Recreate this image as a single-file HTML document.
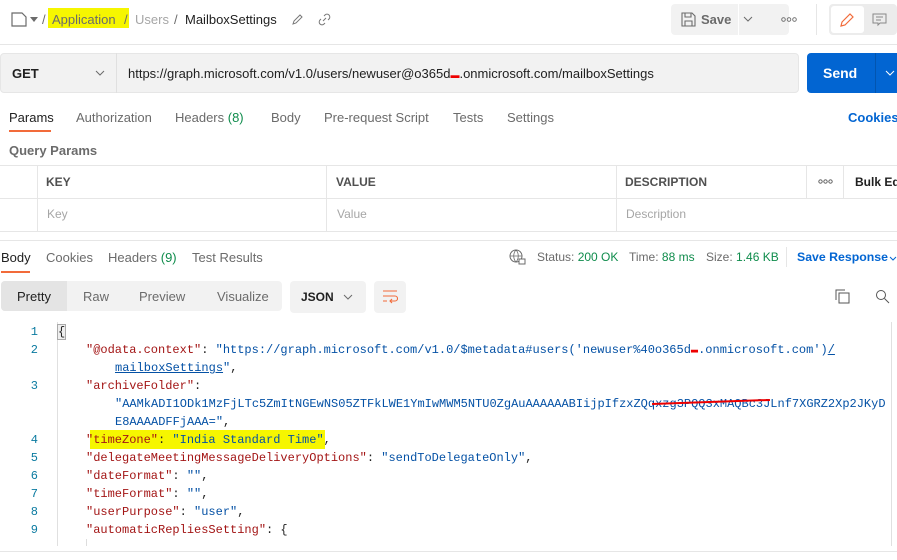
<!DOCTYPE html>
<html><head><meta charset="utf-8"><style>
*{box-sizing:border-box;margin:0;padding:0}
body{width:897px;height:560px;overflow:hidden;background:#fff;font-family:"Liberation Sans",Arial,sans-serif;font-size:13px;color:#212121;position:relative}
.a{position:absolute;white-space:nowrap}
.g{color:#6b6b6b}
.code{font-family:"Liberation Mono",monospace;font-size:12px}
.k{color:#a31515}.v{color:#0451a5}.p{color:#212121}
.ln{position:absolute;left:0;width:38px;text-align:right;color:#0a7aa0;font-family:"Liberation Mono",monospace;font-size:12px}
</style></head><body>
<!-- top bar -->
<svg class="a" style="left:11px;top:12px" width="16" height="15" viewBox="0 0 16 15"><path d="M1 1h10l4 4v9H1z" fill="none" stroke="#6b6b6b" stroke-width="1.2"/></svg>
<div class="a" style="left:30px;top:12px;width:0;height:0;border-left:4px solid transparent;border-right:4px solid transparent;border-top:5px solid #6b6b6b;top:17px"></div>
<div class="a g" style="left:42px;top:12px">/</div>
<div class="a" style="left:48px;top:8px;width:81px;height:20px;background:#f6f600"></div>
<div class="a" style="left:52px;top:12px;color:#6b6b6b">Application</div>
<div class="a g" style="left:124px;top:12px">/</div>
<div class="a" style="left:135px;top:12px;color:#a6a6a6">Users</div>
<div class="a g" style="left:174px;top:12px">/</div>
<div class="a" style="left:185px;top:12px;color:#212121">MailboxSettings</div>
<svg class="a" style="left:291px;top:13px" width="13" height="13" viewBox="0 0 13 13"><path d="M2 11l1-3 6-6 2 2-6 6z" fill="none" stroke="#777" stroke-width="1"/></svg>
<svg class="a" style="left:318px;top:13px" width="13" height="13" viewBox="0 0 13 13"><path d="M5 8l3-3M6 3l1-1a2.5 2.5 0 0 1 4 4l-1 1M7 10l-1 1a2.5 2.5 0 0 1-4-4l1-1" fill="none" stroke="#777" stroke-width="1"/></svg>
<div class="a" style="left:671px;top:4px;width:118px;height:31px;background:#f2f2f2;border-radius:4px"></div>
<div class="a" style="left:738px;top:4px;width:1px;height:31px;background:#fff"></div>
<svg class="a" style="left:681px;top:12px" width="15" height="15" viewBox="0 0 15 15"><path d="M1 1h10l3 3v10H1zM4 1v4h6V1M4 14V9h7v5" fill="none" stroke="#6b6b6b" stroke-width="1.1"/></svg>
<div class="a" style="left:701px;top:12px;color:#6b6b6b;font-weight:bold">Save</div>
<svg class="a" style="left:743px;top:16px" width="10" height="6"><path d="M1 1l4 4 4-4" fill="none" stroke="#6b6b6b"/></svg>
<svg class="a" style="left:781px;top:17px" width="16" height="5"><circle cx="2.5" cy="2.5" r="1.8" fill="none" stroke="#6b6b6b" stroke-width=".9"/><circle cx="8" cy="2.5" r="1.8" fill="none" stroke="#6b6b6b" stroke-width=".9"/><circle cx="13.5" cy="2.5" r="1.8" fill="none" stroke="#6b6b6b" stroke-width=".9"/></svg>
<div class="a" style="left:816px;top:4px;width:1px;height:31px;background:#e6e6e6"></div>
<div class="a" style="left:829px;top:4px;width:68px;height:31px;background:#ececec;border-radius:4px"></div>
<div class="a" style="left:831px;top:6px;width:33px;height:27px;background:#fff;border-radius:3px"></div>
<svg class="a" style="left:840px;top:12px" width="15" height="15" viewBox="0 0 15 15"><path d="M1 14l1-4 8-8 3 3-8 8z" fill="none" stroke="#f26b3a" stroke-width="1.2"/></svg>
<svg class="a" style="left:872px;top:13px" width="15" height="14" viewBox="0 0 15 14"><path d="M1 1h13v9H8l-2 2v-2H1zM4 4h7M4 7h5" fill="none" stroke="#888" stroke-width="1"/></svg>
<div class="a" style="left:0;top:44px;width:897px;height:1px;background:#e6e6e6"></div>
<!-- url row -->
<div class="a" style="left:0;top:53px;width:799px;height:40px;background:#f2f2f2;border:1px solid #e6e6e6;border-radius:4px"></div>
<div class="a" style="left:116px;top:53px;width:1px;height:40px;background:#e0e0e0"></div>
<div class="a" style="left:12px;top:66px;font-weight:bold;color:#212121">GET</div>
<svg class="a" style="left:95px;top:70px" width="10" height="6"><path d="M1 1l4 4 4-4" fill="none" stroke="#6b6b6b"/></svg>
<div class="a" style="left:128px;top:66px;color:#212121">https://graph.microsoft.com/v1.0/users/newuser@o365d<span style="color:#e00;font-weight:bold;font-size:9px">▬</span>.onmicrosoft.com/mailboxSettings</div>
<div class="a" style="left:807px;top:53px;width:90px;height:40px;background:#0265d2;border-radius:4px 0 0 4px"></div>
<div class="a" style="left:875px;top:53px;width:1px;height:40px;background:#0255b0"></div>
<div class="a" style="left:823px;top:65px;color:#fff;font-weight:bold;font-size:14px">Send</div>
<svg class="a" style="left:885px;top:70px" width="10" height="6"><path d="M1 1l4 4 4-4" fill="none" stroke="#fff"/></svg>
<!-- request tabs -->
<div class="a" style="left:9px;top:110px;color:#212121">Params</div>
<div class="a" style="left:9px;top:130px;width:42px;height:2px;background:#f26b3a"></div>
<div class="a g" style="left:76px;top:110px">Authorization</div>
<div class="a g" style="left:175px;top:110px">Headers <span style="color:#0f8c4c">(8)</span></div>
<div class="a g" style="left:271px;top:110px">Body</div>
<div class="a g" style="left:324px;top:110px">Pre-request Script</div>
<div class="a g" style="left:453px;top:110px">Tests</div>
<div class="a g" style="left:507px;top:110px">Settings</div>
<div class="a" style="left:848px;top:110px;color:#0265d2;font-weight:bold">Cookies</div>
<div class="a" style="left:9px;top:143px;color:#6b6b6b;font-weight:bold">Query Params</div>
<!-- table -->
<div class="a" style="left:0;top:165px;width:897px;height:1px;background:#e6e6e6"></div>
<div class="a" style="left:0;top:198px;width:897px;height:1px;background:#e6e6e6"></div>
<div class="a" style="left:0;top:231px;width:897px;height:1px;background:#e6e6e6"></div>
<div class="a" style="left:37px;top:165px;width:1px;height:66px;background:#e6e6e6"></div>
<div class="a" style="left:326px;top:165px;width:1px;height:66px;background:#e6e6e6"></div>
<div class="a" style="left:616px;top:165px;width:1px;height:66px;background:#e6e6e6"></div>
<div class="a" style="left:806px;top:165px;width:1px;height:33px;background:#e6e6e6"></div>
<div class="a" style="left:843px;top:165px;width:1px;height:33px;background:#e6e6e6"></div>
<div class="a" style="left:46px;top:175px;color:#505050;font-weight:bold;font-size:12px">KEY</div>
<div class="a" style="left:336px;top:175px;color:#505050;font-weight:bold;font-size:12px">VALUE</div>
<div class="a" style="left:625px;top:175px;color:#505050;font-weight:bold;font-size:12px">DESCRIPTION</div>
<svg class="a" style="left:818px;top:179px" width="15" height="5"><circle cx="2.5" cy="2.5" r="1.7" fill="none" stroke="#555" stroke-width=".9"/><circle cx="7.5" cy="2.5" r="1.7" fill="none" stroke="#555" stroke-width=".9"/><circle cx="12.5" cy="2.5" r="1.7" fill="none" stroke="#555" stroke-width=".9"/></svg>
<div class="a" style="left:855px;top:175px;color:#212121;font-weight:bold;font-size:12px">Bulk Edit</div>
<div class="a" style="left:47px;top:207px;color:#a6a6a6;font-size:12px">Key</div>
<div class="a" style="left:337px;top:207px;color:#a6a6a6;font-size:12px">Value</div>
<div class="a" style="left:626px;top:207px;color:#a6a6a6;font-size:12px">Description</div>
<div class="a" style="left:0;top:240px;width:897px;height:1px;background:#e6e6e6"></div>
<!-- response tabs -->
<div class="a" style="left:1px;top:250px;color:#212121">Body</div>
<div class="a" style="left:1px;top:271px;width:29px;height:2px;background:#f26b3a"></div>
<div class="a g" style="left:46px;top:250px">Cookies</div>
<div class="a g" style="left:108px;top:250px">Headers <span style="color:#0f8c4c">(9)</span></div>
<div class="a g" style="left:192px;top:250px">Test Results</div>
<svg class="a" style="left:509px;top:249px" width="17" height="16" viewBox="0 0 17 16"><circle cx="7" cy="7" r="6" fill="none" stroke="#6b6b6b"/><path d="M1 7h12M7 1c-3 3-3 9 0 12M7 1c3 3 3 9 0 12" fill="none" stroke="#6b6b6b" stroke-width=".8"/><rect x="10" y="10" width="6" height="5" fill="#fff" stroke="#6b6b6b"/></svg>
<div class="a g" style="left:537px;top:250px;font-size:12px">Status: <span style="color:#0f8c4c">200 OK</span></div>
<div class="a g" style="left:629px;top:250px;font-size:12px">Time: <span style="color:#0f8c4c">88 ms</span></div>
<div class="a g" style="left:706px;top:250px;font-size:12px">Size: <span style="color:#0f8c4c">1.46 KB</span></div>
<div class="a" style="left:786px;top:247px;width:1px;height:20px;background:#e6e6e6"></div>
<div class="a" style="left:797px;top:250px;color:#0265d2;font-weight:bold;font-size:12.3px">Save Response</div>
<svg class="a" style="left:889px;top:256px" width="8" height="5"><path d="M1 1l3 3 3-3" fill="none" stroke="#0265d2"/></svg>
<!-- toolbar -->
<div class="a" style="left:1px;top:281px;width:281px;height:30px;background:#f2f2f2;border-radius:4px"></div>
<div class="a" style="left:1px;top:281px;width:66px;height:30px;background:#e4e4e4;border-radius:4px 0 0 4px"></div>
<div class="a" style="left:17px;top:289px;color:#212121">Pretty</div>
<div class="a g" style="left:83px;top:289px">Raw</div>
<div class="a g" style="left:139px;top:289px">Preview</div>
<div class="a g" style="left:217px;top:289px">Visualize</div>
<div class="a" style="left:290px;top:281px;width:76px;height:32px;background:#f2f2f2;border-radius:4px"></div>
<div class="a" style="left:301px;top:290px;color:#212121;font-weight:bold;font-size:12px">JSON</div>
<svg class="a" style="left:343px;top:294px" width="10" height="6"><path d="M1 1l4 4 4-4" fill="none" stroke="#6b6b6b"/></svg>
<div class="a" style="left:374px;top:281px;width:32px;height:32px;background:#f2f2f2;border-radius:4px"></div>
<svg class="a" style="left:382px;top:290px" width="16" height="14" viewBox="0 0 16 14"><path d="M1 1h14M1 6h12a2.5 2.5 0 0 1 0 5H8M10 9l-2 2 2 2M1 11h4" fill="none" stroke="#f26b3a" stroke-width="1.1"/></svg>
<svg class="a" style="left:835px;top:289px" width="15" height="15" viewBox="0 0 15 15"><path d="M1 11V1h9" fill="none" stroke="#555"/><rect x="4" y="4" width="10" height="10" fill="none" stroke="#555"/></svg>
<svg class="a" style="left:875px;top:289px" width="15" height="15" viewBox="0 0 15 15"><circle cx="6" cy="6" r="4.5" fill="none" stroke="#555"/><path d="M9.5 9.5l4.5 4.5" stroke="#555"/></svg>
<!-- code -->
<div class="a" style="left:57px;top:322px;width:1px;height:224px;background:#e0e0e0"></div>
<div class="a" style="left:891px;top:322px;width:1px;height:224px;background:#e0e0e0"></div>
<div class="a" style="left:0;top:551px;width:897px;height:1px;background:#e6e6e6"></div>
<div class="ln" style="top:325px">1</div>
<div class="ln" style="top:343px">2</div>
<div class="ln" style="top:379px">3</div>
<div class="ln" style="top:433px">4</div>
<div class="ln" style="top:451px">5</div>
<div class="ln" style="top:469px">6</div>
<div class="ln" style="top:487px">7</div>
<div class="ln" style="top:505px">8</div>
<div class="ln" style="top:523px">9</div>
<div class="a code" style="left:58px;top:325px;background:#eee;outline:1px solid #aaa">{</div>
<div class="a" style="left:90px;top:430px;width:235px;height:19px;background:#f6f600"></div>
<div class="a code" style="left:86px;top:343px"><span class="k">"@odata.context"</span>: <span class="v">"https://graph.microsoft.com/v1.0/$metadata#users('newuser%40o365d<span style="color:#e00">▬</span>.onmicrosoft.com')<u>/</u></span></div>
<div class="a code" style="left:115px;top:361px"><span class="v"><u>mailboxSettings</u>"</span>,</div>
<div class="a code" style="left:86px;top:379px"><span class="k">"archiveFolder"</span>:</div>
<div class="a code" style="left:115px;top:397px"><span class="v">"AAMkADI1ODk1MzFjLTc5ZmItNGEwNS05ZTFkLWE1YmIwMWM5NTU0ZgAuAAAAAABIijpIfzxZQqxzg3PQQ3xMAQBc3JLnf7XGRZ2Xp2JKyD</span></div>
<div class="a" style="left:652px;top:401px;width:118px;height:2px;background:#e00;transform:rotate(-2deg)"></div>
<div class="a code" style="left:115px;top:415px"><span class="v">E8AAAADFFjAAA="</span>,</div>
<div class="a code" style="left:86px;top:433px"><span class="k">"timeZone"</span>: <span class="v">"India Standard Time"</span>,</div>
<div class="a code" style="left:86px;top:451px"><span class="k">"delegateMeetingMessageDeliveryOptions"</span>: <span class="v">"sendToDelegateOnly"</span>,</div>
<div class="a code" style="left:86px;top:469px"><span class="k">"dateFormat"</span>: <span class="v">""</span>,</div>
<div class="a code" style="left:86px;top:487px"><span class="k">"timeFormat"</span>: <span class="v">""</span>,</div>
<div class="a code" style="left:86px;top:505px"><span class="k">"userPurpose"</span>: <span class="v">"user"</span>,</div>
<div class="a code" style="left:86px;top:523px"><span class="k">"automaticRepliesSetting"</span>: {</div>
<div class="a" style="left:86px;top:539px;width:1px;height:7px;background:#ddd"></div>
</body></html>
